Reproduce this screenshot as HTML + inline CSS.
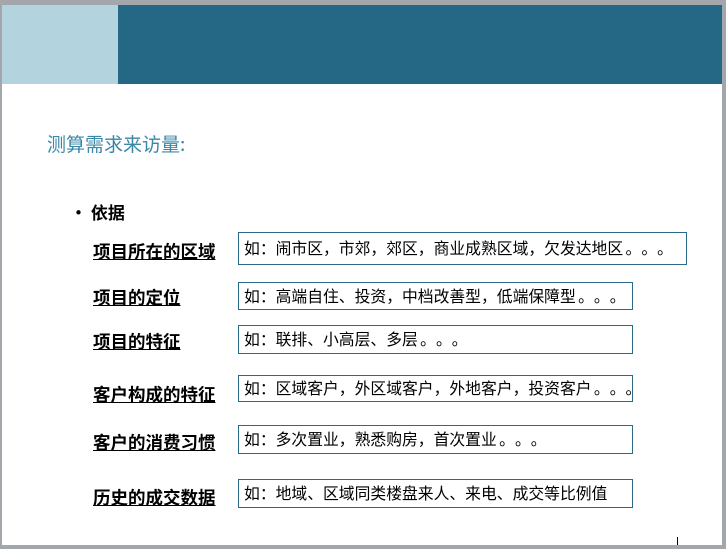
<!DOCTYPE html>
<html><head><meta charset="utf-8"><style>
html,body{margin:0;padding:0;width:726px;height:549px;overflow:hidden;background:#a3a6aa;}
.slide{position:absolute;left:2px;top:5px;width:720px;height:540px;background:#fff;}
.lb{position:absolute;left:2px;top:5px;width:116px;height:79px;background:#b3d3df;}
.db{position:absolute;left:118px;top:5px;width:604px;height:79px;background:#246886;}
.t{position:absolute;font-family:"WenQuanYi Zen Hei","Noto Sans CJK SC",sans-serif;white-space:nowrap;}
.title{left:47px;top:130px;font-size:19px;color:#3a87a8;}
.lab{left:93px;font-size:17.5px;font-weight:bold;text-decoration:underline;color:#000;}
.box{position:absolute;left:238px;width:395px;border:1.5px solid #2a6a88;font-family:"WenQuanYi Zen Hei","Noto Sans CJK SC",sans-serif;font-size:15.8px;color:#000;white-space:nowrap;padding-left:5px;box-sizing:border-box;}
.c{display:inline-block;width:1em;text-align:center;}
.p{display:inline-block;width:1em;text-align:left;padding-left:.15em;box-sizing:border-box;}
</style></head><body>
<div class="slide"></div>
<div class="lb"></div><div class="db"></div>
<div class="t title">测算需求来访量:</div>
<div class="t" style="left:70px;top:199px;font-size:17px;font-weight:bold;">•&nbsp;依据</div>
<div class="t lab" style="top:239px">项目所在的区域</div>
<div class="t lab" style="top:285px">项目的定位</div>
<div class="t lab" style="top:329px">项目的特征</div>
<div class="t lab" style="top:382px">客户构成的特征</div>
<div class="t lab" style="top:430px">客户的消费习惯</div>
<div class="t lab" style="top:485px">历史的成交数据</div>
<div class="box" style="top:232px;width:449px;height:33px;line-height:29px">如<span class="c">：</span>闹市区，市郊，郊区，商业成熟区域，欠发达地区<span class="p">。</span><span class="p">。</span><span class="p">。</span></div>
<div class="box" style="top:282px;height:28px;line-height:25px">如<span class="c">：</span>高端自住、投资，中档改善型，低端保障型<span class="p">。</span><span class="p">。</span><span class="p">。</span></div>
<div class="box" style="top:325px;height:29px;line-height:26px">如<span class="c">：</span>联排、小高层、多层<span class="p">。</span><span class="p">。</span><span class="p">。</span></div>
<div class="box" style="top:375px;height:27px;line-height:24px;overflow:visible">如<span class="c">：</span>区域客户，外区域客户，外地客户，投资客户<span class="p">。</span><span class="p">。</span><span class="p">。</span></div>
<div class="box" style="top:425px;height:29px;line-height:26px">如<span class="c">：</span>多次置业，熟悉购房，首次置业<span class="p">。</span><span class="p">。</span><span class="p">。</span></div>
<div class="box" style="top:479px;height:29px;line-height:26px">如<span class="c">：</span>地域、区域同类楼盘来人、来电、成交等比例值</div>
<div style="position:absolute;left:677px;top:537px;width:1px;height:8px;background:#000"></div>
</body></html>
